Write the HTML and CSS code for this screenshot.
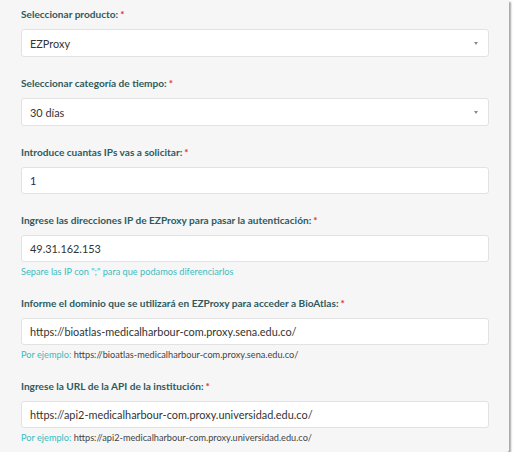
FILE: index.html
```html
<!DOCTYPE html>
<html lang="es">
<head>
<meta charset="utf-8">
<title>Formulario EZProxy</title>
<link rel="stylesheet" href="styles.css">
</head>
<body>
<div class="panel">
  <div class="form-group">
    <label class="label">Seleccionar producto:<span class="req">*</span></label>
    <div class="field select"><span class="value">EZProxy</span><span class="caret"></span></div>
  </div>
  <div class="form-group">
    <label class="label">Seleccionar categoría de tiempo:<span class="req">*</span></label>
    <div class="field select"><span class="value">30 días</span><span class="caret"></span></div>
  </div>
  <div class="form-group">
    <label class="label">Introduce cuantas IPs vas a solicitar:<span class="req">*</span></label>
    <div class="field"><span class="value num">1</span></div>
  </div>
  <div class="form-group has-help">
    <label class="label">Ingrese las direcciones IP de EZProxy para pasar la autenticación:<span class="req">*</span></label>
    <div class="field"><span class="value">49.31.162.153</span></div>
    <div class="help">Separe las IP con ";" para que podamos diferenciarlos</div>
  </div>
  <div class="form-group has-help">
    <label class="label">Informe el dominio que se utilizará en EZProxy para acceder a BioAtlas:<span class="req">*</span></label>
    <div class="field"><span class="value">https://bioatlas-medicalharbour-com.proxy.sena.edu.co/</span></div>
    <div class="help">Por ejemplo: <span class="example">https://bioatlas-medicalharbour-com.proxy.sena.edu.co/</span></div>
  </div>
  <div class="form-group has-help last">
    <label class="label">Ingrese la URL de la API de la institución:<span class="req">*</span></label>
    <div class="field"><span class="value">https://api2-medicalharbour-com.proxy.universidad.edu.co/</span></div>
    <div class="help">Por ejemplo: <span class="example">https://api2-medicalharbour-com.proxy.universidad.edu.co/</span></div>
  </div>
</div>
</body>
</html>
```
FILE: styles.css
```css
html, body {
  margin: 0;
  padding: 0;
  background: #ffffff;
}
body {
  font-family: "Lato", "Open Sans", sans-serif;
}
.panel {
  width: 509px;
  height: 452px;
  box-sizing: border-box;
  background: #f6f6f6;
  padding: 6px 20px 0 21px;
  box-shadow: 2px 2px 2px rgba(0, 0, 0, 0.35);
  border-radius: 0 0 2px 0;
}
.form-group {
  display: flex;
  flex-direction: column;
  margin-bottom: 18px;
}
.form-group.has-help {
  margin-bottom: 17px;
}
.label {
  display: block;
  font-size: 10.1px;
  font-weight: 700;
  line-height: 16px;
  color: #2f5a5e;
  margin-bottom: 7px;
}
.req {
  color: #e0302f;
  margin-left: 2px;
}
.field {
  height: 27px;
  box-sizing: border-box;
  background: #ffffff;
  border: 1px solid #e2e2e2;
  border-radius: 3px;
  display: flex;
  align-items: center;
  justify-content: space-between;
  padding: 0 10px 0 8px;
  font-size: 10.9px;
  color: #333333;
}
.select {
  height: 28px;
}
.value.num {
  color: #1f2a5a;
}
.caret {
  width: 0;
  height: 0;
  border-left: 2.5px solid transparent;
  border-right: 2.5px solid transparent;
  border-top: 3px solid #8a8a8a;
}
.help {
  margin-top: 4px;
  font-size: 9.2px;
  line-height: 12px;
  color: #3bbcbf;
}
.example {
  color: #444444;
}
```
